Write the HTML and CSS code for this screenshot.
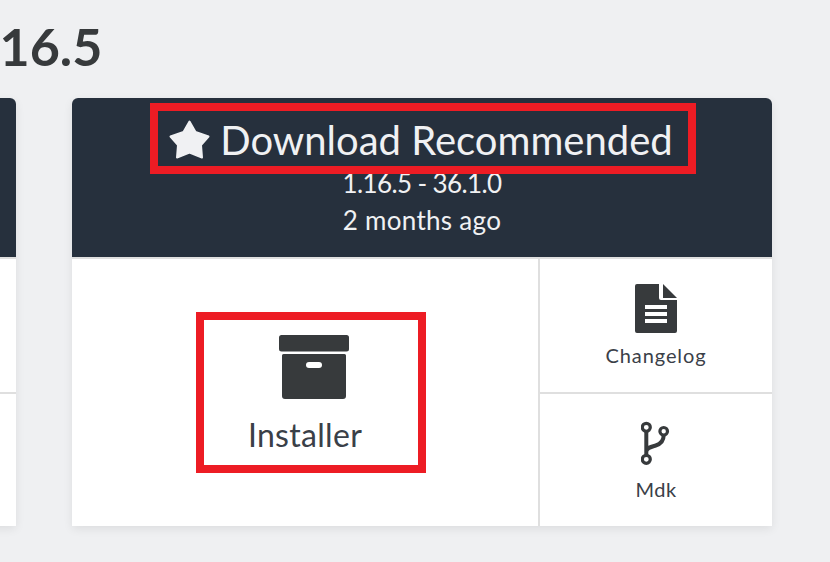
FILE: index.html
```html
<!DOCTYPE html>
<html lang="en">
<head>
    <meta charset="UTF-8">
    <meta name="viewport" content="width=device-width, initial-scale=1.0">
    <title>Downloads 1.16.5</title>
    <link rel="stylesheet" href="styles.css">
</head>
<body>
<h1 class="judul">1.16.5</h1>

<div class="kartu-baris">
    <!-- kartu kiri, hampir seluruhnya di luar layar -->
    <div class="kartu">
        <div class="kartu-atas"></div>
        <div class="kartu-isi">
            <div class="utama"></div>
            <div class="samping">
                <div class="sel sel-log"></div>
                <div class="sel"></div>
            </div>
        </div>
    </div>

    <div class="kartu">
        <div class="kartu-atas">
            <div class="judul-unduh">
                <svg class="ikon-bintang" viewBox="0 0 42 40"><path d="M20.5 1.5L26.5 12 39.5 16.5 32 25 33 37.5 20.5 32.5 8 37.5 9 25 1.5 16.5 14.5 12z"/></svg>
                <span>Download Recommended</span>
            </div>
            <div class="info info-versi">1.16.5 - 36.1.0</div>
            <div class="info info-waktu">2 months ago</div>
        </div>
        <div class="kartu-isi">
            <div class="utama">
                <svg class="ikon-kotak" viewBox="0 0 70 64">
                    <rect x="0" y="0" width="70" height="16.5" rx="2.5"/>
                    <path d="M3 20.5a1.5 1.5 0 0 1 1.5-1.5h61a1.5 1.5 0 0 1 1.5 1.5V61a3 3 0 0 1-3 3H6a3 3 0 0 1-3-3z"/>
                    <rect class="lubang" x="27" y="27" width="16" height="6" rx="3"/>
                </svg>
                <span class="label-utama">Installer</span>
            </div>
            <div class="samping">
                <div class="sel sel-log">
                    <svg class="ikon-file" viewBox="0 0 42 49">
                        <path d="M2 0H24V14a2 2 0 0 0 2 2H42V47a2 2 0 0 1-2 2H2a2 2 0 0 1-2-2V2a2 2 0 0 1 2-2z"/>
                        <path d="M28 0L42 14H28z"/>
                        <rect class="lubang" x="10" y="21" width="22" height="4"/>
                        <rect class="lubang" x="10" y="28" width="22" height="4"/>
                        <rect class="lubang" x="10" y="35" width="22" height="4"/>
                    </svg>
                    <span class="label-kecil label-log">Changelog</span>
                </div>
                <div class="sel sel-mdk">
                    <svg class="ikon-cabang" viewBox="0 0 30 44">
                        <path class="garis" d="M5.3 10V34M22.7 14c0 6-3 9-8 10.5-4 1.2-9 2-9.4 6"/>
                        <circle class="titik" cx="5.3" cy="6.3" r="4"/>
                        <circle class="titik" cx="22.7" cy="10.3" r="3.8"/>
                        <circle class="titik" cx="5.3" cy="38.3" r="4"/>
                    </svg>
                    <span class="label-kecil">Mdk</span>
                </div>
            </div>
        </div>
    </div>
</div>

<!-- kotak merah penanda -->
<div class="tanda tanda-judul"></div>
<div class="tanda tanda-installer"></div>
</body>
</html>
```

FILE: styles.css
```css
/* Gaya Umum */
html, body {
    height: 100%;
}

body {
    position: relative;
    margin: 0;
    width: 830px;
    height: 562px;
    overflow: hidden;
    background-color: #eff0f2;
    color: #373a3c;
    font-family: "Lato", "Open Sans", sans-serif;
}

.judul {
    margin: 15px 0 0 -43px;
    height: 62px;
    font-size: 52px;
    line-height: 62px;
    font-weight: 700;
}

/* Kartu */
.kartu-baris {
    display: flex;
    gap: 56px;
    margin: 21px 0 0 -684px;
}

.kartu {
    flex: 0 0 700px;
    height: 428px;
    display: flex;
    flex-direction: column;
    background: #fff;
    border-radius: 6px 6px 0 0;
    box-shadow: 0 3px 10px rgba(0, 0, 0, 0.08);
    overflow: hidden;
}

.kartu-atas {
    height: 159px;
    box-sizing: border-box;
    padding-top: 17px;
    background-color: #26303d;
    color: #f0f1f3;
    text-align: center;
}

.judul-unduh {
    display: flex;
    justify-content: center;
    align-items: center;
    gap: 9px;
    height: 50px;
    padding-right: 2px;
    font-size: 40px;
    line-height: 50px;
}

.ikon-bintang {
    width: 42px;
    height: 40px;
    fill: #f0f1f3;
    stroke: #f0f1f3;
    stroke-width: 2;
    stroke-linejoin: round;
}

.info {
    height: 37px;
    font-size: 26px;
    line-height: 37px;
}

.info-versi {
    letter-spacing: -0.6px;
}

.info-waktu {
    letter-spacing: 0.3px;
}

.kartu-isi {
    flex: 1;
    display: grid;
    grid-template-columns: 468px 232px;
    border-top: 2px solid #dfdfdf;
}

.utama {
    display: flex;
    flex-direction: column;
    align-items: center;
    padding-top: 76px;
    border-right: 2px solid #dfdfdf;
}

.ikon-kotak {
    width: 70px;
    height: 64px;
    margin-left: 18px;
    fill: #373a3c;
}

.lubang {
    fill: #fff;
}

.label-utama {
    margin-top: 14px;
    font-size: 32px;
    line-height: 44px;
    letter-spacing: 0.3px;
    color: #3a4048;
}

.samping {
    display: flex;
    flex-direction: column;
}

.sel {
    flex: 1;
    display: flex;
    flex-direction: column;
    align-items: center;
}

.sel-log {
    flex: 0 0 135px;
    box-sizing: border-box;
    border-bottom: 2px solid #dfdfdf;
    padding-top: 25px;
}

.sel-mdk {
    padding-top: 27px;
}

.ikon-file {
    width: 42px;
    height: 49px;
    fill: #373a3c;
}

.ikon-cabang {
    width: 30px;
    height: 44px;
}

.garis {
    fill: none;
    stroke: #373a3c;
    stroke-width: 4;
}

.titik {
    fill: #fff;
    stroke: #373a3c;
    stroke-width: 3.2;
}

.label-kecil {
    margin-top: 8px;
    font-size: 20px;
    line-height: 28px;
    letter-spacing: 0.5px;
    color: #3a4048;
}

.label-log {
    letter-spacing: 0.9px;
}

.sel-mdk .label-kecil {
    margin-top: 10px;
}

/* Kotak merah */
.tanda {
    position: absolute;
    box-sizing: border-box;
    border: 8px solid #ed1c24;
}

.tanda-judul {
    left: 150px;
    top: 103px;
    width: 546px;
    height: 71px;
}

.tanda-installer {
    left: 196px;
    top: 312px;
    width: 230px;
    height: 161px;
}
```
